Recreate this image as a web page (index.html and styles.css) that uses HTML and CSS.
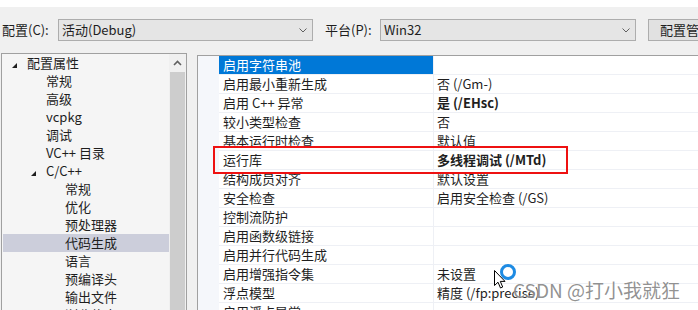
FILE: index.html
```html
<!DOCTYPE html>
<html lang="zh-CN">

<head>
    <title>属性页</title>
    <meta charset="UTF-8" />
    <link rel="stylesheet" href="styles.css">
</head>

<body>
    <div class="top-strip"></div>
    <div class="toolbar">
        <label class="field-label">配置(C):</label>
        <div class="combo combo-config">
            <span>活动(Debug)</span>
            <svg class="chevron" width="8" height="5" viewBox="0 0 8 5"><path d="M0.5 0.5 L4 4 L7.5 0.5" fill="none" stroke="#606060" stroke-width="1" /></svg>
        </div>
        <label class="field-label platform">平台(P):</label>
        <div class="combo combo-platform">
            <span>Win32</span>
            <svg class="chevron" width="8" height="5" viewBox="0 0 8 5"><path d="M0.5 0.5 L4 4 L7.5 0.5" fill="none" stroke="#606060" stroke-width="1" /></svg>
        </div>
        <button class="manager" type="button">配置管理器(O)...</button>
    </div>

    <div class="main">
        <!-- property tree -->
        <div class="tree-panel">
            <div class="tree">
                <div class="item lvl-0"><span class="toggle"><svg width="5" height="5" viewBox="0 0 5 5"><path d="M5 0 L5 5 L0 5 Z" fill="#1e1e1e" /></svg></span>配置属性</div>
                <div class="item lvl-1">常规</div>
                <div class="item lvl-1">高级</div>
                <div class="item lvl-1">vcpkg</div>
                <div class="item lvl-1">调试</div>
                <div class="item lvl-1">VC++ 目录</div>
                <div class="item lvl-1 open"><span class="toggle"><svg width="5" height="5" viewBox="0 0 5 5"><path d="M5 0 L5 5 L0 5 Z" fill="#1e1e1e" /></svg></span>C/C++</div>
                <div class="item lvl-2">常规</div>
                <div class="item lvl-2">优化</div>
                <div class="item lvl-2">预处理器</div>
                <div class="item lvl-2 selected">代码生成</div>
                <div class="item lvl-2">语言</div>
                <div class="item lvl-2">预编译头</div>
                <div class="item lvl-2">输出文件</div>
                <div class="item lvl-2">浏览信息</div>
            </div>
            <div class="scrollbar">
                <div class="scroll-up">
                    <svg width="9" height="6" viewBox="0 0 9 6"><path d="M1 5 L4.5 1.5 L8 5" fill="none" stroke="#606060" stroke-width="1.6" /></svg>
                </div>
                <div class="thumb"></div>
            </div>
        </div>

        <!-- property grid -->
        <div class="grid-panel">
            <div class="gutter"></div>
            <div class="grid">
                <div class="row selected"><div class="name">启用字符串池</div><div class="value"></div></div>
                <div class="row"><div class="name">启用最小重新生成</div><div class="value">否 (/Gm-)</div></div>
                <div class="row"><div class="name">启用 C++ 异常</div><div class="value bold">是 (/EHsc)</div></div>
                <div class="row"><div class="name">较小类型检查</div><div class="value">否</div></div>
                <div class="row"><div class="name">基本运行时检查</div><div class="value">默认值</div></div>
                <div class="row"><div class="name">运行库</div><div class="value bold">多线程调试 (/MTd)</div></div>
                <div class="row"><div class="name">结构成员对齐</div><div class="value">默认设置</div></div>
                <div class="row"><div class="name">安全检查</div><div class="value">启用安全检查 (/GS)</div></div>
                <div class="row"><div class="name">控制流防护</div><div class="value"></div></div>
                <div class="row"><div class="name">启用函数级链接</div><div class="value"></div></div>
                <div class="row"><div class="name">启用并行代码生成</div><div class="value"></div></div>
                <div class="row"><div class="name">启用增强指令集</div><div class="value">未设置</div></div>
                <div class="row"><div class="name">浮点模型</div><div class="value">精度 (/fp:precise)</div></div>
                <div class="row"><div class="name">启用浮点异常</div><div class="value"></div></div>
            </div>

            <div class="annotation"></div>
            <div class="busy-ring"></div>
            <svg class="cursor" width="12" height="19" viewBox="0 0 12 19"><path d="M0.5 0.5 L0.5 15.5 L4 12.2 L6.5 18 L8.7 17 L6.3 11.4 L11 11.4 Z" fill="#fff" stroke="#000" stroke-width="1" stroke-linejoin="round" /></svg>
            <div class="watermark">CSDN @打小我就狂</div>
        </div>
    </div>
</body>

</html>
```

FILE: styles.css
```css
body {
    margin: 0;
    height: 310px;
    overflow: hidden;
    background-color: #f0f0f0;
    color: #1e1e1e;
    font-family: "Noto Sans CJK SC", "Noto Sans", sans-serif;
    font-size: 13px;
    line-height: 18px;
    white-space: nowrap;
}

button {
    font: inherit;
    color: inherit;
}

.top-strip {
    height: 7px;
    background-color: #fff;
}

/* configuration bar */
.toolbar {
    display: flex;
    align-items: center;
    height: 22px;
    padding: 12px 0 12px 2px;
}

.field-label {
    flex-shrink: 0;
    width: 56px;
}

.field-label.platform {
    margin-left: 12px;
    width: 55px;
}

.combo {
    flex-shrink: 0;
    box-sizing: border-box;
    height: 22px;
    display: flex;
    align-items: center;
    justify-content: space-between;
    padding: 0 5px 0 3px;
    border: 1px solid #adadad;
    background-color: #e5e5e5;
}

.combo-config {
    width: 255px;
}

.combo-platform {
    width: 256px;
}

.manager {
    flex-shrink: 0;
    box-sizing: border-box;
    height: 22px;
    margin-left: 12px;
    padding: 0 11px;
    border: 1px solid #adadad;
    background-color: #e1e1e1;
    line-height: 18px;
}

.main {
    display: flex;
    align-items: flex-start;
    padding-left: 1px;
}

/* tree */
.tree-panel {
    flex-shrink: 0;
    box-sizing: border-box;
    width: 186px;
    height: 270px;
    display: flex;
    border: 1px solid #a0a0a0;
    background-color: #f5f5f5;
}

.tree {
    flex: 1;
    padding-left: 1px;
}

.item {
    height: 18px;
}

.item.lvl-0 {
    padding-left: 9px;
}

.item.lvl-1 {
    padding-left: 43px;
}

.item.lvl-1.open {
    padding-left: 28px;
}

.item.lvl-2 {
    padding-left: 62px;
}

.item.selected {
    background-color: #cccedb;
}

.toggle {
    display: inline-block;
    width: 15px;
}

.toggle svg {
    display: block;
    margin-top: 8px;
    float: left;
}

.scrollbar {
    width: 17px;
    background-color: #f0f0f0;
}

.scroll-up {
    height: 18px;
    display: flex;
    align-items: center;
    justify-content: center;
}

.thumb {
    height: 240px;
    margin: 0 1px;
    background-color: #cdcdcd;
}

/* grid */
.grid-panel {
    position: relative;
    flex: 1;
    display: flex;
    height: 260px;
    margin: 2px 0 0 10px;
    border-top: 1px solid #a0a0a0;
    border-left: 1px solid #a0a0a0;
    background-color: #f5f7fb;
}

.gutter {
    width: 21px;
    flex-shrink: 0;
}

.grid {
    flex: 1;
}

.row {
    display: flex;
    height: 18px;
    border-bottom: 1px solid #eef0f5;
    background-color: #fff;
}

.name {
    width: 210px;
    padding-left: 4px;
    flex-shrink: 0;
}

.row.selected .name {
    background-color: #0078d7;
    color: #fff;
}

.value {
    flex: 1;
    padding-left: 3px;
    border-left: 1px solid #eef0f5;
}

.bold {
    font-weight: 700;
}

/* screenshot overlays */
.annotation {
    position: absolute;
    left: 15px;
    top: 90px;
    width: 355px;
    height: 28px;
    box-sizing: border-box;
    border: 2px solid #ee1111;
}

.busy-ring {
    position: absolute;
    left: 302px;
    top: 208px;
    width: 16px;
    height: 16px;
    box-sizing: border-box;
    border-radius: 50%;
    border: 3px solid #1e8be3;
    background-color: #fff;
}

.cursor {
    position: absolute;
    left: 296px;
    top: 214px;
}

.watermark {
    position: absolute;
    left: 315px;
    top: 223px;
    font-size: 19px;
    line-height: 22px;
    color: rgba(110, 110, 110, 0.75);
    text-shadow: 0 0 2px #fff;
}
```
